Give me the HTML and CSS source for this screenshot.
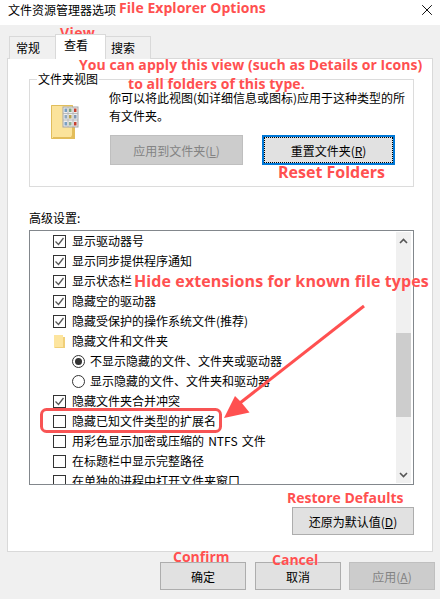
FILE: index.html
```html
<!DOCTYPE html>
<html lang="zh-CN">
<head>
<meta charset="utf-8">
<title>文件资源管理器选项</title>
<link rel="stylesheet" href="styles.css">
</head>
<body>
<div class="window">
  <header class="titlebar">
    <span class="title">文件资源管理器选项</span>
    <svg class="close" viewBox="0 0 10 10" width="10" height="10"><path d="M.2.2l9.600 9.600M9.800.2L.2 9.800" stroke="#111" stroke-width="1" fill="none"/></svg>
  </header>
  <main class="dialog">
    <nav class="tabs">
      <div class="tab tab-first">常规</div>
      <div class="tab tab-active">查看</div>
      <div class="tab tab-last">搜索</div>
    </nav>
    <section class="panel">
      <fieldset class="group">
        <legend class="legend">文件夹视图</legend>
        <div class="group-body">
          <svg class="folder" viewBox="0 0 28 34" width="28" height="34">
            <path d="M0 0H22V11H24V34H0Z" fill="#fde08a"/>
            <path d="M.5.5H21.500V32.500H23V33.500H.5Z" fill="#fbe39b" stroke="#e0bd5c" stroke-width="1"/>
            <path d="M22 28V11h2V34H2v-2H20Z" fill="#e3bd5a"/>
            <rect x="12" y="2" width="15" height="20" fill="#eee" stroke="#a5a5a5"/>
            <path d="M12 8.500H27M12 15H27M17 2V22M22 2V22" stroke="#b0b0b0" stroke-width=".8"/>
            <rect x="13.500" y="3.500" width="2.500" height="3.500" fill="#7a9fc2"/>
            <rect x="18" y="3.500" width="2.500" height="3.500" fill="#7ea57e"/>
            <rect x="23" y="3.500" width="2.500" height="3.500" fill="#c5402f"/>
            <rect x="13.500" y="10" width="2.500" height="3.500" fill="#8fa9c0"/>
            <rect x="18" y="10" width="2.500" height="3.500" fill="#b8a24d"/>
            <rect x="23" y="10" width="2.500" height="3.500" fill="#7f97b5"/>
            <rect x="13.500" y="17" width="2.500" height="3.500" fill="#7a9fc2"/>
            <rect x="18" y="17" width="2.500" height="3.500" fill="#8fb08f"/>
            <rect x="23" y="17" width="2.500" height="3.500" fill="#c5402f"/>
          </svg>
          <div class="group-main">
            <p class="desc">你可以将此视图(如详细信息或图标)应用于这种类型的所有文件夹。</p>
            <div class="group-actions">
              <button class="btn btn-disabled btn-folder">应用到文件夹(<u>L</u>)</button>
              <button class="btn btn-focus btn-folder"><span class="focus-ring">重置文件夹(<u>R</u>)</span></button>
            </div>
          </div>
        </div>
      </fieldset>

      <div class="adv-label">高级设置:</div>
      <div class="list">
        <div class="rows">
          <div class="row"><span class="cb"><svg viewBox="0 0 11 11" width="11" height="11"><path d="M1.500 5.500l3 3 5-6.500" class="tick"/></svg></span>显示驱动器号</div>
          <div class="row"><span class="cb"><svg viewBox="0 0 11 11" width="11" height="11"><path d="M1.500 5.500l3 3 5-6.500" class="tick"/></svg></span>显示同步提供程序通知</div>
          <div class="row"><span class="cb"><svg viewBox="0 0 11 11" width="11" height="11"><path d="M1.500 5.500l3 3 5-6.500" class="tick"/></svg></span>显示状态栏</div>
          <div class="row"><span class="cb"><svg viewBox="0 0 11 11" width="11" height="11"><path d="M1.500 5.500l3 3 5-6.500" class="tick"/></svg></span>隐藏空的驱动器</div>
          <div class="row"><span class="cb"><svg viewBox="0 0 11 11" width="11" height="11"><path d="M1.500 5.500l3 3 5-6.500" class="tick"/></svg></span>隐藏受保护的操作系统文件(推荐)</div>
          <div class="row"><svg class="mini-folder" viewBox="0 0 11 13" width="11" height="13"><path d="M0 0H9V11H11V13H0Z" fill="#fde59f"/><path d="M9 2H11V13H1V12H9Z" fill="#f0cf78"/></svg>隐藏文件和文件夹</div>
          <div class="row row-sub"><span class="radio radio-on"></span>不显示隐藏的文件、文件夹或驱动器</div>
          <div class="row row-sub"><span class="radio"></span>显示隐藏的文件、文件夹和驱动器</div>
          <div class="row"><span class="cb"><svg viewBox="0 0 11 11" width="11" height="11"><path d="M1.500 5.500l3 3 5-6.500" class="tick"/></svg></span>隐藏文件夹合并冲突</div>
          <div class="row"><span class="cb"></span>隐藏已知文件类型的扩展名</div>
          <div class="row"><span class="cb"></span>用彩色显示加密或压缩的 NTFS 文件</div>
          <div class="row"><span class="cb"></span>在标题栏中显示完整路径</div>
          <div class="row"><span class="cb"></span>在单独的进程中打开文件夹窗口</div>
        </div>
        <div class="scrollbar">
          <svg class="arrow" viewBox="0 0 9 6" width="9" height="6"><path d="M1 5l3.500-3.500L8 5" fill="none" stroke="#555" stroke-width="1.600"/></svg>
          <div class="track"><div class="thumb"></div></div>
          <svg class="arrow" viewBox="0 0 9 6" width="9" height="6"><path d="M1 1l3.500 3.500L8 1" fill="none" stroke="#555" stroke-width="1.600"/></svg>
        </div>
      </div>
      <div class="restore-line">
        <button class="btn btn-restore">还原为默认值(<u>D</u>)</button>
      </div>
    </section>
    <footer class="footer">
      <button class="btn btn-foot">确定</button>
      <button class="btn btn-foot">取消</button>
      <button class="btn btn-foot btn-disabled">应用(<u>A</u>)</button>
    </footer>
  </main>

  <svg class="overlay" viewBox="0 0 440 599" width="440" height="599">
    <rect x="41.500" y="409.500" width="179" height="22" rx="5" fill="none" stroke="#f85454" stroke-width="3"/>
    <path d="M364 306L240 403" stroke="#ff5050" stroke-width="3" fill="none"/>
    <path d="M224 418L235 396L241 402L249.500 412.500Z" fill="#ff5050"/>
  </svg>
  <span class="note note-title">File Explorer Options</span>
  <span class="note note-view">View</span>
  <span class="note note-apply">You can apply this view (such as Details or Icons)<span class="note-apply-2">to all folders of this type.</span></span>
  <span class="note note-reset">Reset Folders</span>
  <span class="note note-hide">Hide extensions for known file types</span>
  <span class="note note-restore">Restore Defaults</span>
  <span class="note note-confirm">Confirm</span>
  <span class="note note-cancel">Cancel</span>
</div>
</body>
</html>
```

FILE: styles.css
```css
* { box-sizing: border-box; }
html, body { margin: 0; padding: 0; }
body { width: 440px; height: 599px; overflow: hidden; background: #f0f0f0; }

.window {
  position: relative;
  width: 440px;
  height: 599px;
  display: flex;
  flex-direction: column;
  font-family: "Noto Sans CJK SC", "Noto Sans", sans-serif;
  font-size: 12px;
  color: #000;
}

.titlebar {
  height: 25px;
  background: #fff;
  display: flex;
  align-items: flex-start;
  justify-content: space-between;
  padding: 0 8px;
}
.title { font-size: 12px; line-height: 20px; }
.close { display: block; margin-top: 5px; }

.dialog { flex: 1; display: flex; flex-direction: column; padding: 9px 7px 0 7px; }

.tabs { display: flex; height: 25px; padding-left: 2px; align-items: flex-end; position: relative; z-index: 1; margin-bottom: -1px; }
.tab {
  height: 23px;
  background: #f0f0f0;
  border: 1px solid #d9d9d9;
  border-bottom: 0;
  display: flex;
  align-items: center;
  line-height: 16px;
  padding-bottom: 1px;
}
.tab-first { width: 46px; border-right: 0; padding-left: 6px; }
.tab-last { width: 45px; border-left: 0; padding-left: 5px; }
.tab-active { width: 51px; height: 25px; background: #fff; padding: 0 0 4px 8px; }

.panel {
  height: 494px;
  background: #fff;
  border: 1px solid #d9d9d9;
  padding: 13px 18px 0 21px;
}

.group {
  margin: 0;
  padding: 0;
  height: 115px;
  border: 1px solid #dcdcdc;
  min-width: 0;
}
.legend { padding: 0 1px; margin-left: 7px; line-height: 14px; font-size: 12px; }
.group-body { display: flex; padding: 11px 0 0 21px; }
.folder { display: block; margin-top: 8px; flex: none; }
.group-main { margin-left: 30px; width: 300px; }
.desc { margin: -8px 0 0; line-height: 18px; width: 298px; }
.group-actions { display: flex; gap: 19px; margin-top: 10px; margin-left: 1px; }

.btn {
  font: inherit;
  color: #000;
  background: #e1e1e1;
  border: 1px solid #adadad;
  padding: 0;
  margin: 0;
  display: flex;
  align-items: center;
  justify-content: center;
}
.btn u { text-underline-offset: 1px; }
.btn-disabled { background: #cccccc; border-color: #bfbfbf; color: #838383; }
.btn-folder { width: 133px; height: 30px; }
.btn-focus { border: 2px solid #0078d7; padding: 0; }
.focus-ring {
  width: 100%;
  height: 100%;
  border: 1px dotted #000;
  display: flex;
  align-items: center;
  justify-content: center;
}

.adv-label { margin-top: 22px; line-height: 18px; height: 18px; }

.list {
  margin-top: 3px;
  height: 255px;
  border: 1px solid #82878c;
  background: #fff;
  display: flex;
  overflow: hidden;
}
.rows { flex: 1; padding-left: 23px; height: 253px; overflow: hidden; }
.row { height: 20px; display: flex; align-items: center; line-height: 20px; white-space: nowrap; word-spacing: 1.500px; }
.row-sub { padding-left: 19px; }
.cb {
  width: 13px;
  height: 13px;
  border: 1px solid #333;
  background: #fff;
  margin-right: 6px;
  flex: none;
  display: flex;
}
.cb svg { display: block; margin: 0; }
.tick { fill: none; stroke: #555; stroke-width: 1.300; }
.mini-folder { margin: 0 7px 0 1px; flex: none; }
.radio {
  width: 13px;
  height: 13px;
  border: 1px solid #333;
  border-radius: 50%;
  margin-right: 5px;
  flex: none;
  background: #fff;
  position: relative;
}
.radio-on::after {
  content: "";
  position: absolute;
  inset: 2px;
  border-radius: 50%;
  background: #333;
}

.scrollbar {
  width: 15px;
  margin: 1px 2px 1px 0;
  background: #f0f0f0;
  display: flex;
  flex-direction: column;
  align-items: center;
  flex: none;
}
.arrow { display: block; margin: 6px 0 5px; flex: none; }
.track { flex: 1; width: 100%; position: relative; }
.thumb { position: absolute; left: 0; right: 0; top: 84px; height: 84px; background: #cdcdcd; }

.restore-line { display: flex; justify-content: flex-end; margin-top: 22px; }
.btn-restore { width: 122px; height: 28px; }

.footer { display: flex; justify-content: flex-end; gap: 9px; margin: 10px -2px 0 0; }
.btn-foot { width: 86px; height: 28px; }
.footer .btn-foot:last-child { margin-left: -1px; }

.overlay { position: absolute; left: 0; top: 0; pointer-events: none; }
.note {
  position: absolute;
  font-family: "Open Sans", "Noto Sans", sans-serif;
  font-weight: 700;
  font-size: 14px;
  line-height: 19px;
  color: #ff5050;
  white-space: nowrap;
  text-shadow: 0 0 1px rgba(255, 255, 255, .8);
}
.note-title { left: 119px; top: 0; line-height: 16px; letter-spacing: .05px; }
.note-view { left: 60px; top: 23px; letter-spacing: .4px; }
.note-apply { left: 79px; top: 55px; letter-spacing: .08px; }
.note-apply-2 { display: block; margin-left: 49px; }
.note-reset { left: 278px; top: 163px; font-size: 16px; }
.note-hide { left: 134px; top: 272px; font-size: 16px; letter-spacing: .1px; }
.note-restore { left: 287px; top: 488px; }
.note-confirm { left: 173px; top: 547px; }
.note-cancel { left: 272px; top: 550px; }
```
